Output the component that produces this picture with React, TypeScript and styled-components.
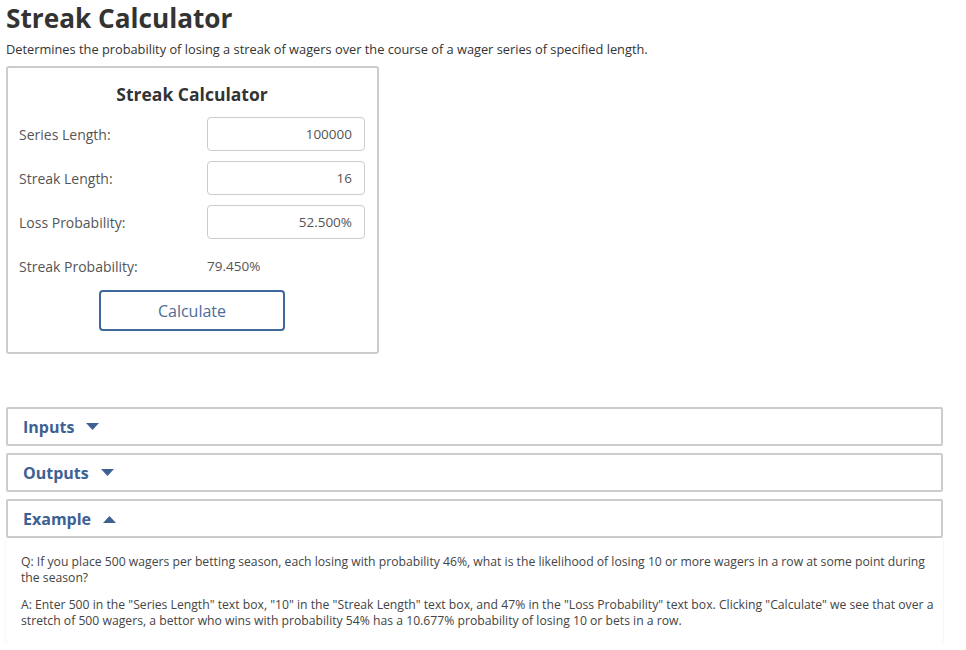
import React, { FC, ReactNode, useState } from 'react';
import styled, { createGlobalStyle } from 'styled-components';

const GlobalStyle = createGlobalStyle`
  html, body {
    margin: 0;
    padding: 0;
    background: #fff;
  }
  body {
    font-family: 'Open Sans', 'Liberation Sans', Arial, sans-serif;
    color: #333;
  }
`;

const Page = styled.div`
  display: flex;
  flex-direction: column;
  padding: 0 23px 0 6px;
`;

const PageTitle = styled.h1`
  margin: 1px 0 0;
  font-size: 26.2px;
  line-height: 34px;
  font-weight: 700;
  color: #333;
`;

const Intro = styled.p`
  margin: 6px 0 0;
  font-size: 12.8px;
  line-height: 16px;
  color: #333;
`;

const CalcBox = styled.div`
  width: 373px;
  box-sizing: border-box;
  margin-top: 9px;
  border: 2px solid #ccc;
  border-radius: 3px;
  padding: 13px 12px 21px 11px;
  display: flex;
  flex-direction: column;
`;

const CalcTitle = styled.div`
  text-align: center;
  font-size: 17.5px;
  line-height: 26px;
  font-weight: 700;
  color: #333;
  margin-bottom: 10px;
`;

const Rows = styled.div`
  display: grid;
  grid-template-columns: 188px 158px;
  row-gap: 10px;
`;

const Label = styled.div`
  display: flex;
  align-items: center;
  height: 34px;
  font-size: 14px;
  color: #555;
`;

const Field = styled.input`
  box-sizing: border-box;
  width: 158px;
  height: 34px;
  border: 1px solid #ccc;
  border-radius: 4px;
  padding: 0 12px;
  text-align: right;
  font-family: inherit;
  font-size: 13.5px;
  color: #555;
  outline: none;
`;

const Output = styled.div`
  display: flex;
  align-items: center;
  height: 34px;
  font-size: 13.5px;
  color: #555;
`;

const ButtonRow = styled.div`
  display: flex;
  justify-content: flex-start;
  padding-left: 80px;
  margin-top: 7px;
`;

const CalcButton = styled.button`
  box-sizing: border-box;
  width: 186px;
  height: 41px;
  background: #fff;
  border: 2px solid #41689b;
  border-radius: 4px;
  font-family: inherit;
  font-size: 16px;
  color: #4b6d98;
  cursor: pointer;
`;

const Sections = styled.div`
  margin-top: 53px;
  display: flex;
  flex-direction: column;
  gap: 7px;
`;

const Section = styled.div`
  display: flex;
  flex-direction: column;
`;

const SectionHeader = styled.button`
  box-sizing: border-box;
  height: 39px;
  display: flex;
  align-items: center;
  gap: 12px;
  padding: 0 15px;
  background: #fff;
  border: 2px solid #ccc;
  border-radius: 2px;
  font-family: inherit;
  font-size: 16px;
  font-weight: 700;
  color: #3d6193;
  cursor: pointer;
  text-align: left;
`;

const Caret = styled.svg<{ $open: boolean }>`
  width: 13px;
  height: 8px;
  transform: rotate(${(p) => (p.$open ? '180deg' : '0deg')});
`;

const SectionBody = styled.div`
  padding: 16px 6px 15px 15px;
  border-radius: 0 0 4px 4px;
  box-shadow: 0 1px 3px rgba(0, 0, 0, 0.08);
  font-size: 12.2px;
  line-height: 16px;
  color: #444;

  p {
    margin: 0;
  }
  p + p {
    margin-top: 11px;
  }
`;

type AccordionProps = {
  title: string;
  defaultOpen?: boolean;
  children?: ReactNode;
};

const Accordion: FC<AccordionProps> = ({ title, defaultOpen = false, children }) => {
  const [open, setOpen] = useState(defaultOpen);
  return (
    <Section>
      <SectionHeader onClick={() => setOpen(!open)}>
        {title}
        <Caret $open={open} viewBox="0 0 13 8">
          <polygon points="0,0 13,0 6.5,7" fill="#3d6193" />
        </Caret>
      </SectionHeader>
      {open && <SectionBody>{children}</SectionBody>}
    </Section>
  );
};

const App: FC = () => {
  const [series, setSeries] = useState('100000');
  const [streak, setStreak] = useState('16');
  const [loss, setLoss] = useState('52.500%');

  return (
    <>
      <GlobalStyle />
      <Page>
        <PageTitle>Streak Calculator</PageTitle>
        <Intro>
          Determines the probability of losing a streak of wagers over the course of a wager series of specified length.
        </Intro>
        <CalcBox>
          <CalcTitle>Streak Calculator</CalcTitle>
          <Rows>
            <Label>Series Length:</Label>
            <Field value={series} onChange={(e) => setSeries(e.target.value)} />
            <Label>Streak Length:</Label>
            <Field value={streak} onChange={(e) => setStreak(e.target.value)} />
            <Label>Loss Probability:</Label>
            <Field value={loss} onChange={(e) => setLoss(e.target.value)} />
            <Label>Streak Probability:</Label>
            <Output>79.450%</Output>
          </Rows>
          <ButtonRow>
            <CalcButton>Calculate</CalcButton>
          </ButtonRow>
        </CalcBox>
        <Sections>
          <Accordion title="Inputs" />
          <Accordion title="Outputs" />
          <Accordion title="Example" defaultOpen>
            <p>
              Q: If you place 500 wagers per betting season, each losing with probability 46%, what is the likelihood of
              losing 10 or more wagers in a row at some point during the season?
            </p>
            <p>
              A: Enter 500 in the "Series Length" text box, "10" in the "Streak Length" text box, and 47% in the "Loss
              Probability" text box. Clicking "Calculate" we see that over a stretch of 500 wagers, a bettor who wins
              with probability 54% has a 10.677% probability of losing 10 or bets in a row.
            </p>
          </Accordion>
        </Sections>
      </Page>
    </>
  );
};

export default App;
